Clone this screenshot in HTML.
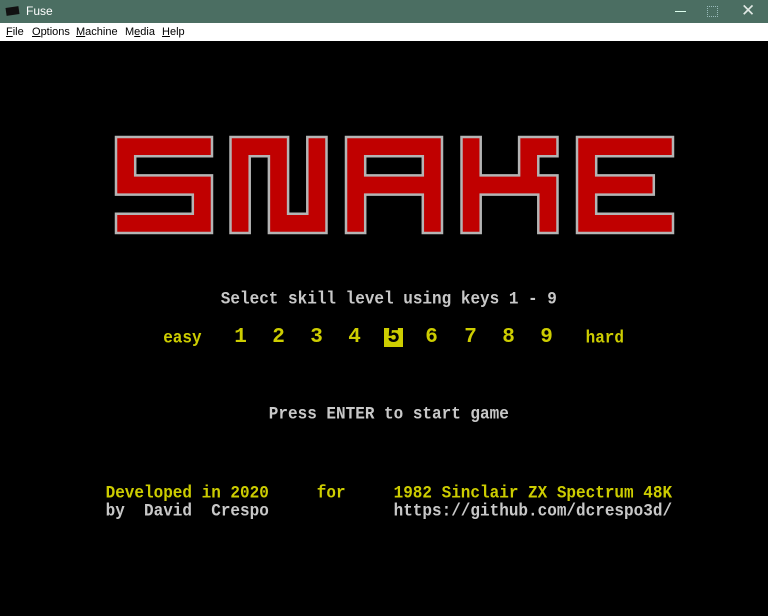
<!DOCTYPE html>
<html><head><meta charset="utf-8"><style>
body{margin:0;width:768px;height:616px;overflow:hidden;background:#000;position:relative;font-family:"Liberation Sans",sans-serif}
#tb{position:absolute;left:0;top:0;width:768px;height:23px;background:#4b6e62;color:#fff;font-size:12px}
#mb{position:absolute;left:0;top:23px;width:768px;height:18px;background:#fff;font-size:11px;color:#000}
#mb span{position:absolute;top:3px}
.t{position:absolute;font-family:"Liberation Mono",monospace;font-size:16px;font-weight:bold;line-height:16px;white-space:pre;transform:scaleY(1.1)}
.g{color:#c8c8c8}.y{color:#cdcd00}
.n{position:absolute;font-family:"Liberation Mono",monospace;font-size:21px;font-weight:bold;line-height:20px;color:#cdcd00;width:19px;text-align:center}
</style></head><body>
<div id="tb">
<div style="position:absolute;left:6px;top:7px;width:13px;height:8px;background:#111;transform:rotate(-8deg)"></div>
<span style="position:absolute;left:26px;top:4px">Fuse</span>
<div style="position:absolute;left:675px;top:11px;width:11px;height:1px;background:#dfe"></div>
<div style="position:absolute;left:707px;top:6px;width:9px;height:9px;border:1px dotted #9bb"></div>
<span style="position:absolute;left:741px;top:1px;font-size:17px;color:#e0e8e4">✕</span>
</div>
<div id="mb"><span style="left:6px"><u>F</u>ile</span><span style="left:32px"><u>O</u>ptions</span><span style="left:76px"><u>M</u>achine</span><span style="left:125px">M<u>e</u>dia</span><span style="left:162px"><u>H</u>elp</span></div>

<svg style="position:absolute;left:0;top:0" width="768" height="616">
<g fill="#c00000" stroke="#b4b4b4" stroke-width="2.5" fill-rule="evenodd" stroke-linejoin="miter">
<g transform="translate(116,137)"><path vector-effect="non-scaling-stroke" transform="scale(19.2)" d="M0 0H5V1H1V2H5V5H0V4H4V3H0Z"/></g>
<g transform="translate(230.5,137)"><path vector-effect="non-scaling-stroke" transform="scale(19.2)" d="M0 0H3V4H4V0H5V5H2V1H1V5H0Z"/></g>
<g transform="translate(346,137)"><path vector-effect="non-scaling-stroke" transform="scale(19.2)" d="M0 0H5V5H4V3H1V5H0Z M1 1H4V2H1Z"/></g>
<g transform="translate(461.5,137)"><path vector-effect="non-scaling-stroke" transform="scale(19.2)" d="M0 0H1V2H3V0H5V1H4V2H5V5H4V3H1V5H0Z"/></g>
<g transform="translate(577,137)"><path vector-effect="non-scaling-stroke" transform="scale(19.2)" d="M0 0H5V1H1V2H4V3H1V4H5V5H0Z"/></g>
</g></svg>

<div class="t g" style="left:220.8px;top:291px">Select skill level using keys 1 - 9</div>
<div class="t y" style="left:163.2px;top:330px">easy</div>
<div class="n" style="left:231px;top:328px">1</div>
<div class="n" style="left:269px;top:328px">2</div>
<div class="n" style="left:307px;top:328px">3</div>
<div class="n" style="left:345px;top:328px">4</div>
<div class="n" style="left:384px;top:328px;background:#cdcd00;color:#000;height:19px">5</div>
<div class="n" style="left:422px;top:328px">6</div>
<div class="n" style="left:461px;top:328px">7</div>
<div class="n" style="left:499px;top:328px">8</div>
<div class="n" style="left:537px;top:328px">9</div>
<div class="t y" style="left:585.6px;top:330px">hard</div>
<div class="t g" style="left:268.8px;top:406px">Press ENTER to start game</div>
<div class="t y" style="left:105.6px;top:485px">Developed in 2020</div>
<div class="t y" style="left:316.8px;top:485px">for</div>
<div class="t y" style="left:393.6px;top:485px">1982 Sinclair ZX Spectrum 48K</div>
<div class="t g" style="left:105.6px;top:503px">by  David  Crespo</div>
<div class="t g" style="left:393.6px;top:503px">https://github.com/dcrespo3d/</div>
</body></html>
